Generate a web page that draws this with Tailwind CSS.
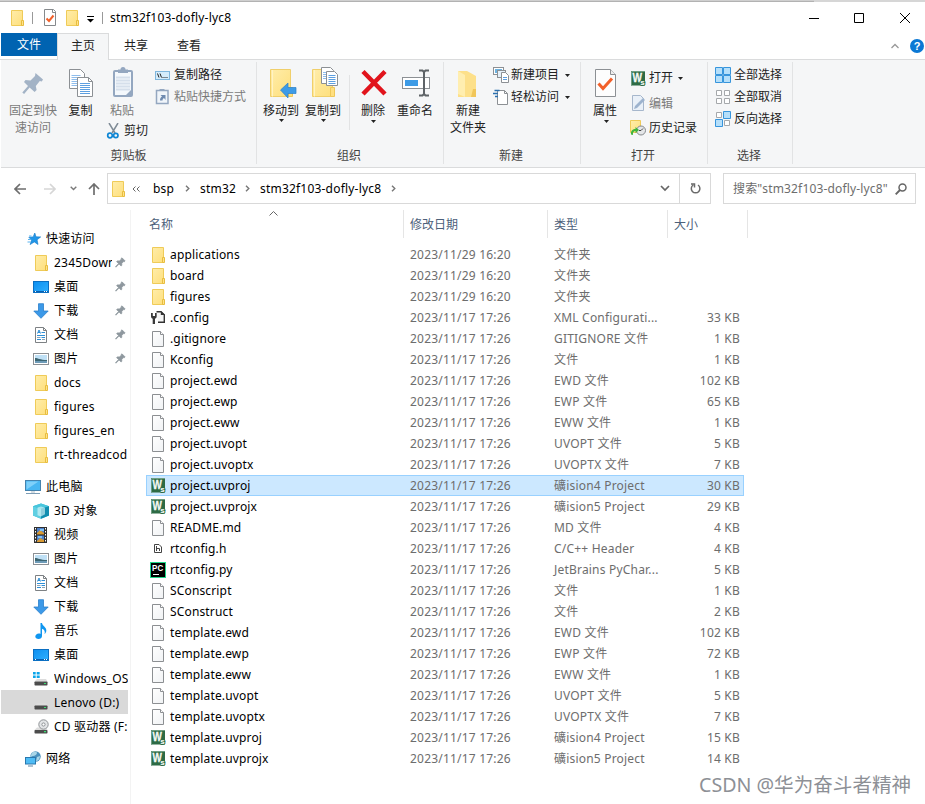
<!DOCTYPE html>
<html lang="zh-CN">
<head>
    <meta charset="UTF-8">
    <meta name="viewport" content="width=device-width, initial-scale=1.0">
    <script src="https://cdn.jsdelivr.net/npm/@tailwindcss/browser@4"></script>
    <title>stm32f103-dofly-lyc8</title>
</head>
<body class="relative w-[925px] h-[804px] overflow-hidden bg-white text-black text-[12px] leading-[17px] font-['Noto_Sans','Noto_Sans_CJK_SC',sans-serif]">

<!-- icons -->
<svg class="absolute size-0">
    <defs>
        <linearGradient id="gfolder" x1="0" y1="0" x2="1" y2="1"><stop offset="0" stop-color="#ffedaa"/><stop offset="1" stop-color="#fedf7c"/></linearGradient>
        <linearGradient id="gdoc" x1="0" y1="0" x2="1" y2="1"><stop offset="0" stop-color="#fff"/><stop offset="1" stop-color="#f0f2f4"/></linearGradient>
        <linearGradient id="gdesk" x1="0" y1="0" x2="1" y2="1"><stop offset="0" stop-color="#0d8ff0"/><stop offset="1" stop-color="#2fb0ff"/></linearGradient>
    </defs>
    <symbol id="folder" viewBox="0 0 16 16">
        <path d="M2.500.5h11v15h-11z" fill="url(#gfolder)" stroke="#efcb58"/>
        <path d="M12.500 15.500v-5h2v5z" fill="#ffe38a" stroke="#e8bd3f"/>
    </symbol>
    <symbol id="doc" viewBox="0 0 16 16">
        <path d="M2.500.5h8l3 3v12h-11z" fill="url(#gdoc)" stroke="#8c8f92"/>
        <path d="M10.500.5v3h3" fill="#fff" stroke="#8c8f92"/>
    </symbol>
    <symbol id="config" viewBox="0 0 16 16">
        <path d="M6.500 1.700H11l3.300 3v7.600H8" fill="#f5f5f5" stroke="#333" stroke-width="1.400"/>
        <path d="M10.800 1v4H15z" fill="#333"/>
        <path d="M1 3v3.500a2.300 2.300 0 0 0 1.700 2.200V14h2.300V8.700A2.300 2.300 0 0 0 6.700 6.500V3L5 3v3H2.800V3z" fill="#3a3a3a"/>
    </symbol>
    <symbol id="uv" viewBox="0 0 16 16">
        <rect x="1" y="0" width="14" height="14.500" fill="#2d6b45"/>
        <path d="M1.500 14.500V.5H15" fill="none" stroke="#6d9d80"/>
        <text x="2.500" y="11" font-family="Liberation Sans" font-weight="700" font-size="12.500" textLength="9.500" lengthAdjust="spacingAndGlyphs" fill="#f4f8f5" stroke="#f4f8f5" stroke-width=".3">W</text>
        <text x="10.300" y="13.500" font-family="Liberation Sans" font-weight="700" font-size="8" fill="#fff" stroke="#2d6b45" stroke-width="2" paint-order="stroke">s</text>
    </symbol>
    <symbol id="hfile" viewBox="0 0 16 16">
        <path d="M4.500 3.500h4.500l2.500 2.500v5.500h-7z" fill="#fff" stroke="#444"/>
        <path d="M6.500 5v5M9.500 7.500V10M6.500 7.500h3" fill="none" stroke="#444"/>
    </symbol>
    <symbol id="pycharm" viewBox="0 0 16 16">
        <rect width="16" height="16" fill="#21d789"/>
        <rect x="1" y="1" width="14" height="14" fill="#000"/>
        <text x="2" y="8.500" font-family="Liberation Sans" font-weight="700" font-size="8.500" textLength="11.500" lengthAdjust="spacingAndGlyphs" fill="#fff">PC</text>
        <rect x="3" y="12" width="6" height="1" fill="#fff"/>
    </symbol>
    <symbol id="star" viewBox="0 0 16 16">
        <path d="M9.800 2l1.200 3.800 4.700.1-3.600 2.900.9 4.700-3.700-2.600-4.200 2.700 1.500-4.500L3.800 6.300l4.300-.4z" fill="#2196e8" stroke="#1378c8" stroke-width=".6"/>
        <path d="M4 5h2.500M3 8.500h3M2.500 11h3" stroke="#58b3f0"/>
    </symbol>
    <symbol id="desktop" viewBox="0 0 16 16">
        <rect x=".5" y="2.500" width="15" height="11" fill="url(#gdesk)" stroke="#0b6fc2"/>
        <path d="M1 12.500h14" stroke="#0a5fae"/><path d="M2 12.500h1M11 12.500h1M13 12.500h1" stroke="#fff"/>
    </symbol>
    <symbol id="down" viewBox="0 0 16 16">
        <path d="M5.500.7h5V8h4.700L8 15.300.8 8h4.700z" fill="#3c99e8" stroke="#2a7fcc" stroke-width=".8"/>
    </symbol>
    <symbol id="document" viewBox="0 0 16 16">
        <path d="M2.500.5h8l3 3v12h-11z" fill="#fff" stroke="#7d8184"/><path d="M10.500.5v3h3" fill="none" stroke="#7d8184"/>
        <path d="M4.500 6.500L6 3l1.500 3.500M5 5.500h2M8.500 5.500H12M4 8.500h8M8.500 10.500H12M4 12.500h4" fill="none" stroke="#2f8fd6"/>
        <path d="M4 10.500h3.500M9 12.500h3" stroke="#8fa3b2"/>
    </symbol>
    <symbol id="picture" viewBox="0 0 16 16">
        <rect x=".5" y="2.500" width="15" height="11" fill="#fff" stroke="#8c9094"/>
        <rect x="2" y="4" width="12" height="8" fill="#bfe0f5"/>
        <path d="M2 7c3 0 5 2 12 2v1.500H2z" fill="#3d6672"/><path d="M2 10h12v2H2z" fill="#6d9bb8"/>
    </symbol>
    <symbol id="pin" viewBox="0 0 16 16">
        <path d="M10.200 1.200l4.600 4.600-1.200 1-1-.3-2.800 3 .2 2.500-1.200 1.200-2.900-2.900-4.500 4.500-.7-.7 4.400-4.500L2.300 6.800l1.200-1.200 2.700.2 3-2.700-.2-1z" fill="currentColor" stroke="currentColor"/>
    </symbol>
    <symbol id="pc" viewBox="0 0 16 16">
        <rect x=".5" y="1.500" width="15" height="10" fill="#48b6f2" stroke="#4583ae"/><path d="M1.500 10.500V2.500h12z" fill="#7fd0fa"/>
        <path d="M1 14.500h14" stroke="#7d9db5"/>
        <path d="M6 13h4" stroke="#a9bac7"/>
    </symbol>
    <symbol id="cube" viewBox="0 0 16 16">
        <path d="M0 3.200L8 .5l8 2.700v9.300L8 15.700 0 12.500z" fill="#29b5d3"/><path d="M0 3.200l8 2.500v10L0 12.500z" fill="#5fcfe2"/><path d="M0 3.200L8 .5l8 2.700-8 2.500z" fill="#49c6dd"/><path d="M8 5.700l8-2.500v9.300l-8 3.200z" fill="#128eb0"/><path d="M4.500 4.500L8 3.500l4 1.200v6.500L8 13.500l-3.500-1.200z" fill="#e4fafc" opacity=".6"/>
    </symbol>
    <symbol id="video" viewBox="0 0 16 16">
        <rect x="1" y="0" width="13" height="16" fill="#303030"/><rect x="4" y="1" width="7" height="14" fill="#4c7fca"/>
        <path d="M4 6l3-3 4 3v2H4zM4 14l3-3 4 2v2H4z" fill="#d99a32"/><path d="M7 2h4v2H7zM5 9h4v2H5z" fill="#7ec1f4"/><path d="M4 8h7" stroke="#222"/>
        <path d="M2.500 1v14M12.500 1v14" stroke="#fff" stroke-dasharray="1.500 1.500"/>
    </symbol>
    <symbol id="music" viewBox="0 0 16 16">
        <path d="M7.500 0h1.500c.3 3 4.500 4 4.300 7.500 0 1.700-.8 2.800-1.800 3.500.9-2.800-.1-4.500-2.500-5.300v7.200c0 1.800-1.500 3-3.500 3S2.300 15 2.300 13.500s1.500-3 3.500-3c.7 0 1.200.1 1.700.4z" fill="#0f96f0"/>
    </symbol>
    <symbol id="drive" viewBox="0 0 16 16">
        <path d="M4 8h9l1.500 2.500h-13z" fill="#dcdcdc"/><rect x="1.500" y="10.500" width="13" height="4" rx=".7" fill="#4c4c4c"/><path d="M11 12.500h2" stroke="#38e070" stroke-width="1.200"/>
    </symbol>
    <symbol id="windrive" viewBox="0 0 16 16">
        <path d="M0 1h2.700v2.500H0zM3.700 1h3v2.500h-3zM0 4.500h2.700V7H0zM3.700 4.500h3V7h-3z" fill="#0aa5ea"/><use href="#drive"/>
    </symbol>
    <symbol id="cd" viewBox="0 0 16 16">
        <path d="M4 8.500h9l1.500 2.500h-13z" fill="#dcdcdc"/><rect x="1.500" y="11" width="13" height="3.500" rx=".7" fill="#4c4c4c"/><path d="M11 12.700h2" stroke="#38e070" stroke-width="1.200"/>
        <circle cx="10.500" cy="5.500" r="4.700" fill="#e3e5e7" stroke="#8f9396"/><circle cx="10.500" cy="5.500" r="1.600" fill="#fff" stroke="#8f9396"/>
    </symbol>
    <symbol id="network" viewBox="0 0 16 16">
        <circle cx="10.500" cy="5.500" r="5.200" fill="#4a91bd"/><path d="M7 2c2-2 5-1 5 0s-2 3-4 3-2 2-3 1zM12 6l3-1c0 3-2 5-4 5z" fill="#a9d6e8"/>
        <rect x=".5" y="6.500" width="10" height="6.500" fill="#4fbcf5" stroke="#2a78ae"/><path d="M3 15h5" stroke="#5f87a5"/>
    </symbol>
    <symbol id="bigfolder" viewBox="0 0 32 32">
        <path d="M5.500 2.500h20v27h-20z" fill="url(#gfolder)" stroke="#f0cf6b"/><path d="M7.500 3v26.500" stroke="#fff3c4"/><path d="M23.500 29.500V20.500h4v9z" fill="#ffdf80" stroke="#efc85a"/>
    </symbol>
</svg>

<!-- title bar -->
<div class="h-[2px] bg-[#d6d6d6]"><div class="h-[2px] w-[814px] bg-[#b2b2b2] border-t border-[#cfcfcf]"></div></div>
<div class="flex h-[31px] items-center">
    <svg class="ml-[9px] size-4"><use href="#folder"/></svg>
    <div class="ml-[7px] w-px h-3 bg-[#999]"></div>
    <svg class="ml-[9px] size-[17px]" viewBox="0 0 17 17"><path d="M2.500.5h9l2 2v14h-11z" fill="#fff" stroke="#85898c"/><path d="M10.500.5v3h3" fill="none" stroke="#85898c"/><path d="M4.500 9.500l2.500 2.500L11.500 6.500" fill="none" stroke="#f0602a" stroke-width="2"/></svg>
    <svg class="ml-[5px] size-4"><use href="#folder"/></svg>
    <svg class="ml-[6px] mt-[3px] w-[9px] h-[7px]" viewBox="0 0 9 7"><path d="M1 .5h7" stroke="#000"/><path d="M1 3h7L4.500 6.500z"/></svg>
    <div class="ml-[7px] w-px h-3 bg-[#999]"></div>
    <div class="ml-[7px] tracking-[0.2px]">stm32f103-dofly-lyc8</div>
    <svg class="ml-auto w-[10px] h-[10px]" viewBox="0 0 10 10"><path d="M0 5.500h10" stroke="#000"/></svg>
    <svg class="ml-[35px] w-[10px] h-[10px]" viewBox="0 0 10 10"><path d="M.5.5h9v9h-9z" fill="none" stroke="#000"/></svg>
    <svg class="ml-[36px] mr-[15px] w-[10px] h-[10px]" viewBox="0 0 10 10"><path d="M0 0l10 10M10 0L0 10" stroke="#000"/></svg>
</div>

<!-- tabs -->
<div class="flex h-[27px] pl-px border-b border-[#dadbdc] text-[#222]">
    <div class="w-14 h-[23px] bg-[#0063b1] text-white text-center leading-[24px]">文件</div>
    <div class="w-[52px] h-[27px] bg-[#f5f6f7] border border-b-0 border-[#dadbdc] text-center leading-[24px]">主页</div>
    <div class="w-[54px] text-center leading-[26px]">共享</div>
    <div class="w-[52px] text-center leading-[26px]">查看</div>
    <svg class="ml-auto mt-[10px] w-[8px] h-[6px]" viewBox="0 0 8 6"><path d="M.5 5L4 1.500 7.500 5" fill="none" stroke="#999" stroke-width="1.300"/></svg>
    <svg class="ml-[11px] mt-[6px] mr-px size-[14px]" viewBox="0 0 14 14"><circle cx="7" cy="7" r="7" fill="#0b78d4"/><text x="7" y="11" text-anchor="middle" font-family="Liberation Sans" font-weight="700" font-size="11" fill="#fff">?</text></svg>
</div>

<!-- ribbon -->
<div class="flex h-[108px] ml-px bg-[#f5f6f7] border-b border-[#dadbdc] text-[#222]">
    <div class="w-[256px] h-[102px] mt-[2px] border-r border-[#e2e3e4]">
        <div class="flex h-[85px] pl-[4px] pt-[5px] text-center">
            <div class="w-14 text-[#7a7a7a]">
                <svg class="mx-auto size-8 mb-[3px]" viewBox="0 0 32 32"><path d="M18.500 6l7.500 6.500-1.200 2-2-.5-4 5 .8 4-2 2-5-4.500-5.500 6.500-1.800-1.500L11 19l-4-4 1.500-2 5 .5 4.500-4.500z" fill="#a3b3c6"/></svg>
                固定到快<br>速访问
            </div>
            <div class="w-[39px]">
                <svg class="mx-auto size-8 mb-[3px]" viewBox="0 0 32 32">
                    <path d="M4.500 2.500h11l4 4v15h-15z" fill="#fff" stroke="#8c9094"/><path d="M6.500 8.500h9M6.500 10.500h9M6.500 12.500h9M6.500 14.500h9M6.500 16.500h9M6.500 18.500h9" stroke="#8fbdec"/>
                    <path d="M12.500 10.500h11l4 4v15h-15z" fill="#fff" stroke="#8c9094"/><path d="M23.500 10.500v4h4" fill="none" stroke="#8c9094"/><path d="M15 16.500h10M15 18.500h10M15 20.500h10M15 22.500h10M15 24.500h10M15 26.500h10" stroke="#5d9fe0"/>
                </svg>
                复制
            </div>
            <div class="w-[55px] pl-px">
                <div class="w-[42px] text-[#7a7a7a]">
                    <svg class="ml-[6px] size-8 mb-[3px]" viewBox="0 0 32 32"><rect x="7" y="4" width="18" height="25" rx="1" fill="#f4f8fc" stroke="#94a7c0" stroke-width="2"/><path d="M11 6V2.500h2.500a2.500 2.500 0 0 1 5 0H21V6z" fill="#94a7c0"/><path d="M9 10.500h14M9 13.500h14M9 16.500h14M9 19.500h14M9 22.500h14" stroke="#d5dfeb" stroke-width="2"/><path d="M19 28l5-5v5z" fill="#94a7c0"/></svg>
                    粘贴
                </div>
                <div class="flex pl-[5px] mt-[3px] gap-[2px] items-center">
                    <svg class="size-4" viewBox="0 0 16 16"><path d="M3 0l6 10M12 0L6 10" stroke="#7f8b96" stroke-width="1.500"/><circle cx="4" cy="12.500" r="2.300" fill="none" stroke="#0f86d4" stroke-width="1.700"/><circle cx="9.800" cy="12.500" r="2.200" fill="none" stroke="#0f86d4" stroke-width="1.700"/></svg>
                    <span class="text-nowrap">剪切</span>
                </div>
            </div>
            <div class="flex flex-col -mt-px text-nowrap">
                <div class="flex h-[22px] items-start gap-[3px]">
                    <svg class="w-4 h-[17px]" viewBox="0 0 16 17"><rect x=".5" y="5.500" width="14" height="8" fill="#d5ecfb" stroke="#7fb6dd"/><path d="M2.500 7.500l1.500 4M5 7.500l1.500 4M7.500 11.500h1M9.500 11.500h1M11.500 11.500h1" stroke="#222"/></svg>
                    <span>复制路径</span>
                </div>
                <div class="flex h-[22px] items-start gap-[3px] text-[#7a7a7a]">
                    <svg class="w-4 h-[17px]" viewBox="0 0 16 17"><rect x="1.500" y="2.500" width="11.500" height="13" fill="#f0f5fa" stroke="#94a7c0" stroke-width="1.500"/><path d="M4.500 3V1h5v2z" fill="#94a7c0"/><path d="M5 12.500c0-2 .5-3 2-4L5.500 7h5v5L9 10c-1 .5-1.500 1.500-1.500 2.500z" fill="#6f8bb0"/></svg>
                    <span>粘贴快捷方式</span>
                </div>
            </div>
        </div>
        <div class="text-center text-[#444]">剪贴板</div>
    </div>

    <div class="w-[187px] h-[102px] mt-[2px] border-r border-[#e2e3e4]">
        <div class="flex h-[85px] pl-[3px] pt-[5px] text-center">
            <div class="w-[42px] text-nowrap">
                <svg class="mx-auto size-8 mb-[3px]" viewBox="0 0 32 32"><use href="#bigfolder"/><path d="M15.500 23l7.500-7v4.500h8v6h-8V31z" fill="#3d9be6" stroke="#2a7fcb" stroke-width=".7"/></svg>
                移动到
                <svg class="mx-auto w-[5px] h-[3px]" viewBox="0 0 5 3"><path d="M0 0h5L2.500 3z" fill="#222"/></svg>
            </div>
            <div class="w-[42px] text-nowrap">
                <svg class="mx-auto size-8 mb-[3px]" viewBox="0 0 32 32"><use href="#bigfolder"/><path d="M14.500.5h9l3 3v13h-12z" fill="#fff" stroke="#8c9094"/><path d="M16 5.500h8M16 7.500h8M16 9.500h8M16 11.500h8" stroke="#8fbdec"/><path d="M19.500 4.500h8l3 3v11h-11z" fill="#fff" stroke="#8c9094"/><path d="M21.500 8.500h7M21.500 10.500h7M21.500 12.500h7M21.500 14.500h7M21.500 16.500h7" stroke="#5d9fe0"/></svg>
                复制到
                <svg class="mx-auto w-[5px] h-[3px]" viewBox="0 0 5 3"><path d="M0 0h5L2.500 3z" fill="#222"/></svg>
            </div>
            <div class="w-px h-[55px] ml-[5px] mt-2 bg-[#e2e3e4]"></div>
            <div class="w-[46px]">
                <svg class="mx-auto size-8 mb-[3px]" viewBox="0 0 32 32"><path d="M6 4.500l22 22.500M28 4.500L6 27" stroke="#e1141c" stroke-width="4.500"/></svg>
                删除
                <svg class="mx-auto mt-px w-[5px] h-[3px]" viewBox="0 0 5 3"><path d="M0 0h5L2.500 3z" fill="#222"/></svg>
            </div>
            <div class="w-[38px] text-nowrap">
                <svg class="mx-auto size-8 mb-[3px]" viewBox="0 0 32 32"><rect x="3.500" y="10.500" width="27" height="11" fill="#fff" stroke="#8c9094"/><rect x="6" y="13" width="13" height="6" fill="#3d9be6"/><path d="M20 3.500h3.500l1.500 1.500 1.500-1.500H30M25 5v22M20 28.500h3.500L25 27l1.500 1.500H30" fill="none" stroke="#5e6367" stroke-width="2"/></svg>
                重命名
            </div>
        </div>
        <div class="pr-[2px] text-center text-[#444]">组织</div>
    </div>

    <div class="w-[137px] h-[102px] mt-[2px] border-r border-[#e2e3e4]">
        <div class="flex h-[85px] pl-[3px] pt-[5px]">
            <div class="w-[42px] text-center">
                <svg class="mx-auto size-8 mb-[3px]" viewBox="0 0 32 32"><path d="M6 4h9l9 5v21H6z" fill="#fde08a"/><path d="M6 4l7 4v22l-7-3z" fill="#ffeeb0"/><path d="M21 22h3v8h-5z" fill="#f1c65a"/></svg>
                新建<br>文件夹
            </div>
            <div class="ml-[4px] -mt-px">
                <div class="flex h-[22px] gap-[2px]">
                    <svg class="w-4 h-[17px]" viewBox="0 0 16 17"><rect x=".5" y="1.500" width="10" height="7" fill="#fff" stroke="#8c9094"/><rect x="2" y="3" width="7" height="4" fill="#6db3e0"/><rect x="4.500" y="4.500" width="8" height="7" fill="#e5f1fa" stroke="#8c9094"/><path d="M8.500 6.500h4l3 3v7h-7z" fill="#fff" stroke="#8c9094"/><path d="M10 11.500h4M10 13.500h4" stroke="#5d9fe0"/></svg>
                    <span>新建项目</span>
                    <svg class="ml-[4px] mt-[8px] w-[5px] h-[3px]" viewBox="0 0 5 3"><path d="M0 0h5L2.500 3z" fill="#222"/></svg>
                </div>
                <div class="flex h-[22px] gap-[2px]">
                    <svg class="w-4 h-[17px]" viewBox="0 0 16 17"><path d="M4.500 2.500h7l3 3v11h-10z" fill="#fff" stroke="#8c9094"/><path d="M11.500 2.500v3h3" fill="none" stroke="#8c9094"/><path d="M1.500 2.500h5M0 5.500h5M2 8.500h3" stroke="#2b6fae" stroke-width="1.300"/></svg>
                    <span>轻松访问</span>
                    <svg class="ml-[4px] mt-[8px] w-[5px] h-[3px]" viewBox="0 0 5 3"><path d="M0 0h5L2.500 3z" fill="#222"/></svg>
                </div>
            </div>
        </div>
        <div class="pr-[2px] text-center text-[#444]">新建</div>
    </div>

    <div class="w-[127px] h-[102px] mt-[2px] border-r border-[#e2e3e4]">
        <div class="flex h-[85px] pl-[3px] pt-[5px]">
            <div class="w-[42px] text-center">
                <svg class="mx-auto size-8 mb-[3px]" viewBox="0 0 32 32"><path d="M6.500 2.500h15l5 5v22h-20z" fill="#fdfdfd" stroke="#8c9094"/><path d="M21.500 2.500v5h5" fill="#eee" stroke="#8c9094"/><path d="M9.500 16.500l4.500 5 9-10" fill="none" stroke="#f2602a" stroke-width="3"/></svg>
                属性
                <svg class="ml-[20px] mt-px w-[5px] h-[3px]" viewBox="0 0 5 3"><path d="M0 0h5L2.500 3z" fill="#222"/></svg>
            </div>
            <div class="ml-[4px] pt-[3px]">
                <div class="flex h-[25px] gap-[3px]">
                    <svg class="mt-px size-4"><use href="#uv"/></svg>
                    <span class="-mt-px">打开</span>
                    <svg class="ml-[2px] mt-[7px] w-[5px] h-[3px]" viewBox="0 0 5 3"><path d="M0 0h5L2.500 3z" fill="#222"/></svg>
                </div>
                <div class="flex h-[25px] gap-[3px] text-[#7a7a7a]">
                    <svg class="size-4" viewBox="0 0 16 16"><path d="M2.500.5h8l3 3v12h-11z" fill="#e9f0f8" stroke="#a6b7cc"/><path d="M4 14l1-3 8-8 2 2-8 8z" fill="#9db3ce"/></svg>
                    <span>编辑</span>
                </div>
                <div class="flex h-[25px] gap-[3px]">
                    <svg class="size-4" viewBox="0 0 16 16"><path d="M.5.500h10v12H.5z" fill="url(#gfolder)" stroke="#efcb58"/><circle cx="11" cy="10.500" r="4.500" fill="#e4e6e8" stroke="#85898c"/><path d="M11 10.500l2-2M11 10.500H9" stroke="#444"/><path d="M1 14.500C.5 10.500 3 9 5.500 9V7l3.500 3-3.500 3v-2c-1.500 0-3 1-2.500 4z" fill="#3fb53c"/></svg>
                    <span class="-mt-px">历史记录</span>
                </div>
            </div>
        </div>
        <div class="pr-[2px] text-center text-[#444]">打开</div>
    </div>

    <div class="w-[85px] h-[102px] mt-[2px] border-r border-[#e2e3e4]">
        <div class="h-[85px] pl-[7px] pt-[4px]">
            <div class="flex h-[22px] gap-[3px]">
                <svg class="mt-px size-4" viewBox="0 0 16 16"><path d="M.5.5h7v7h-7zM8.500.5h7v7h-7zM.5 8.500h7v7h-7zM8.500 8.500h7v7h-7z" fill="#b5dffa" stroke="#3795dc"/></svg>
                <span>全部选择</span>
            </div>
            <div class="flex h-[22px] gap-[3px]">
                <svg class="mt-px size-4" viewBox="0 0 16 16"><path d="M1.500 1.500h5v5h-5zM9.500 1.500h5v5h-5zM1.500 9.500h5v5h-5zM9.500 9.500h5v5h-5z" fill="#fff" stroke="#a5a8ab"/></svg>
                <span>全部取消</span>
            </div>
            <div class="flex h-[22px] gap-[3px]">
                <svg class="mt-px size-4" viewBox="0 0 16 16"><path d="M1.500 1.500h5v5h-5zM9.500 9.500h5v5h-5z" fill="#fff" stroke="#a5a8ab"/><path d="M8.500.5h7v7h-7zM.5 8.500h7v7h-7z" fill="#b5dffa" stroke="#3795dc"/></svg>
                <span>反向选择</span>
            </div>
        </div>
        <div class="pr-[2px] text-center text-[#444]">选择</div>
    </div>
</div>

<!-- address bar -->
<div class="flex h-[42px] pt-[5px]">
    <svg class="ml-[14px] mt-[10px] w-3 h-3" viewBox="0 0 12 12"><path d="M12 6H1.500M6 1L1 6l5 5" fill="none" stroke="#6e6e6e" stroke-width="1.700"/></svg>
    <svg class="ml-[18px] mt-[10px] w-3 h-3" viewBox="0 0 12 12"><path d="M0 6h10.500M6 1l5 5-5 5" fill="none" stroke="#d6d6d6" stroke-width="1.700"/></svg>
    <svg class="ml-[14px] mt-[13px] w-[7px] h-[5px]" viewBox="0 0 7 5"><path d="M.7.7l2.800 2.800L6.300.7" fill="none" stroke="#7a7a7a" stroke-width="1.400"/></svg>
    <svg class="ml-[11px] mt-[10px] w-3 h-3" viewBox="0 0 12 12"><path d="M6 12V1.500M1 6l5-5 5 5" fill="none" stroke="#6e6e6e" stroke-width="1.700"/></svg>
    <div class="flex items-center ml-[7px] w-[604px] h-[31px] border border-[#d9d9d9] tracking-[0.2px]">
        <svg class="ml-[2px] size-4"><use href="#folder"/></svg>
        <svg class="ml-[6px] w-[8px] h-[6px]" viewBox="0 0 8 6"><path d="M3.500.5L1 3l2.500 2.500M7.500.5L5 3l2.500 2.500" fill="none" stroke="#666"/></svg>
        <span class="ml-[13px] w-[22px] text-nowrap">bsp</span>
        <svg class="ml-[10px] w-[5px] h-[7px]" viewBox="0 0 5 7"><path d="M1 .7l2.800 2.800L1 6.300" fill="none" stroke="#777" stroke-width="1.400"/></svg>
        <span class="ml-[10px] w-[36px] text-nowrap">stm32</span>
        <svg class="ml-[9px] w-[5px] h-[7px]" viewBox="0 0 5 7"><path d="M1 .7l2.800 2.800L1 6.300" fill="none" stroke="#777" stroke-width="1.400"/></svg>
        <span class="ml-[10px] w-[122px] text-nowrap">stm32f103-dofly-lyc8</span>
        <svg class="ml-[9px] w-[5px] h-[7px]" viewBox="0 0 5 7"><path d="M1 .7l2.800 2.800L1 6.300" fill="none" stroke="#777" stroke-width="1.400"/></svg>
        <svg class="ml-auto mr-[9px] w-[10px] h-[7px]" viewBox="0 0 10 7"><path d="M1 1l4 4 4-4" fill="none" stroke="#666" stroke-width="1.700"/></svg>
        <div class="flex w-[31px] h-full items-center justify-center border-l border-[#d9d9d9]">
            <svg class="w-[11px] h-[11px]" viewBox="0 0 11 11"><path d="M8 2a4.300 4.300 0 1 1-4.800 0M1 1h3.500v3.500" fill="none" stroke="#6a6a6a" stroke-width="1.500"/></svg>
        </div>
    </div>
    <div class="flex items-center ml-[12px] w-[193px] h-[31px] pl-[9px] border border-[#d9d9d9] text-[#6d6d6d]">
        <span class="tracking-[0.15px] text-nowrap">搜索"stm32f103-dofly-lyc8"</span>
        <svg class="ml-auto mr-[8px] w-3 h-3" viewBox="0 0 12 12"><circle cx="7.500" cy="4.500" r="3.500" fill="none" stroke="#666" stroke-width="1.500"/><path d="M5 7L.7 11.300" stroke="#666" stroke-width="1.900"/></svg>
    </div>
</div>

<div class="flex">
    <!-- navigation pane -->
    <div class="w-[131px] h-[594px] pt-[16px] border-r border-[#f3f3f3]" id="nav"></div>

    <!-- file list -->
    <div class="w-[617px]">
        <div class="flex h-[28px] text-[#4c607a]">
            <div class="relative w-[273px] pl-[18px] pt-[6px] border-r border-[#e5e5e5]">
                名称
                <svg class="absolute left-[138px] top-[1px] w-[9px] h-[5px]" viewBox="0 0 9 5"><path d="M.5 4.500l4-4 4 4" fill="none" stroke="#666"/></svg>
            </div>
            <div class="w-[144px] pl-[6px] pt-[6px] border-r border-[#e5e5e5]">修改日期</div>
            <div class="w-[120px] pl-[6px] pt-[6px] border-r border-[#e5e5e5]">类型</div>
            <div class="w-[80px] pl-[6px] pt-[6px] border-r border-[#e5e5e5]">大小</div>
        </div>
        <div class="ml-[15px] mt-[6px] w-[598px]" id="files"></div>
    </div>
</div>

<div class="absolute left-[699px] top-[773px] text-[19.600px] leading-[24px] text-[#8d9096] text-nowrap" id="watermark">CSDN @华为奋斗者精神</div>

<script>
    // icon, label, level, pinned
    const nav = [
        ["star", "快速访问", 0],
        ["folder", "2345Downloads", 1, true],
        ["desktop", "桌面", 1, true],
        ["down", "下载", 1, true],
        ["document", "文档", 1, true],
        ["picture", "图片", 1, true],
        ["folder", "docs", 1],
        ["folder", "figures", 1],
        ["folder", "figures_en", 1],
        ["folder", "rt-threadcod", 1],
        null,
        ["pc", "此电脑", 0],
        ["cube", "3D 对象", 1],
        ["video", "视频", 1],
        ["picture", "图片", 1],
        ["document", "文档", 1],
        ["down", "下载", 1],
        ["music", "音乐", 1],
        ["desktop", "桌面", 1],
        ["windrive", "Windows_OS", 1],
        ["drive", "Lenovo (D:)", 1],
        ["cd", "CD 驱动器 (F:)", 1],
        null,
        ["network", "网络", 0],
    ]
    let html = ""
    for (let n of nav) {
        if (!n) {
            html += `<div class="h-2"></div>`
            continue
        }
        const pad = n[2] ? "pl-[32px] gap-[5px]" : "pl-[24px] gap-[5px]"
        const bg = n[1] === "Lenovo (D:)" ? "bg-[#d9d9d9]" : ""
        const label = n[3] ? "w-[58px]" : "flex-1"
        const pin = n[3] ? `<svg class="-ml-[2px] mt-px size-[11px] shrink-0 text-[#8e979e]"><use href="#pin"/></svg>` : ""
        html += `<div class="flex items-center h-6 ml-px w-[127px] overflow-hidden ${pad} ${bg}">
            <svg class="mt-px size-4 shrink-0"><use href="#${n[0]}"/></svg>
            <span class="overflow-hidden text-nowrap tracking-[0.2px] ${label}">${n[1]}</span>${pin}</div>`
    }
    document.querySelector("#nav").innerHTML = html

    const files = [
        ["folder", "applications", "29 16:20", "文件夹", ""],
        ["folder", "board", "29 16:20", "文件夹", ""],
        ["folder", "figures", "29 16:20", "文件夹", ""],
        ["config", ".config", "17 17:26", "XML Configurati...", "33 KB"],
        ["doc", ".gitignore", "17 17:26", "GITIGNORE 文件", "1 KB"],
        ["doc", "Kconfig", "17 17:26", "文件", "1 KB"],
        ["doc", "project.ewd", "17 17:26", "EWD 文件", "102 KB"],
        ["doc", "project.ewp", "17 17:26", "EWP 文件", "65 KB"],
        ["doc", "project.eww", "17 17:26", "EWW 文件", "1 KB"],
        ["doc", "project.uvopt", "17 17:26", "UVOPT 文件", "5 KB"],
        ["doc", "project.uvoptx", "17 17:26", "UVOPTX 文件", "7 KB"],
        ["uv", "project.uvproj", "17 17:26", "礦ision4 Project", "30 KB"],
        ["uv", "project.uvprojx", "17 17:26", "礦ision5 Project", "29 KB"],
        ["doc", "README.md", "17 17:26", "MD 文件", "4 KB"],
        ["hfile", "rtconfig.h", "17 17:26", "C/C++ Header", "4 KB"],
        ["pycharm", "rtconfig.py", "17 17:26", "JetBrains PyChar...", "5 KB"],
        ["doc", "SConscript", "17 17:26", "文件", "1 KB"],
        ["doc", "SConstruct", "17 17:26", "文件", "2 KB"],
        ["doc", "template.ewd", "17 17:26", "EWD 文件", "102 KB"],
        ["doc", "template.ewp", "17 17:26", "EWP 文件", "72 KB"],
        ["doc", "template.eww", "17 17:26", "EWW 文件", "1 KB"],
        ["doc", "template.uvopt", "17 17:26", "UVOPT 文件", "5 KB"],
        ["doc", "template.uvoptx", "17 17:26", "UVOPTX 文件", "7 KB"],
        ["uv", "template.uvproj", "17 17:26", "礦ision4 Project", "15 KB"],
        ["uv", "template.uvprojx", "17 17:26", "礦ision5 Project", "14 KB"],
    ]
    html = ""
    for (let f of files) {
        const sel = f[1] === "project.uvproj" ? "bg-[#cce8ff] border-[#99d1ff]" : "border-transparent"
        html += `<div class="flex items-center h-[21px] border text-nowrap tracking-[0.2px] text-[#6d6d6d] ${sel}">
            <svg class="ml-[3px] size-4"><use href="#${f[0]}"/></svg>
            <div class="ml-[4px] w-[240px] tracking-[0.15px] text-black">${f[1]}</div>
            <div class="w-[144px]">2023/11/${f[2]}</div>
            <div class="w-[120px]">${f[3]}</div>
            <div class="w-[66px] text-right">${f[4]}</div>
        </div>`
    }
    document.querySelector("#files").innerHTML = html
</script>
</body>
</html>
